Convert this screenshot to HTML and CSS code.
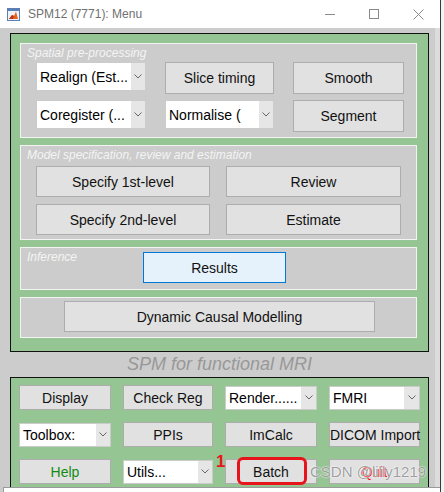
FILE: index.html
```html
<!DOCTYPE html>
<html lang="en">
<head>
    <meta charset="UTF-8">
    <title>SPM12 (7771): Menu</title>
    <link rel="stylesheet" href="styles.css">
</head>
<body>
<div class="page">
    <div class="window">
        <!-- title bar -->
        <div class="titlebar">
            <svg class="app-icon" viewBox="0 0 13 13">
                <rect x="0.5" y="0.5" width="12" height="12" fill="#eef3fa" stroke="#5b7fb5"/>
                <rect x="1" y="1" width="11" height="2" fill="#5b7fb5"/>
                <path d="M2 11 L5 7 L7 8 L9 3.5 L11 11 Z" fill="#e8621c"/>
                <path d="M5 7 L7 8 L6 11 L2 11 Z" fill="#b9361a"/>
            </svg>
            <span class="title">SPM12 (7771): Menu</span>
            <div class="caption-btns">
                <span class="cap"><svg width="10" height="1"><line x1="0" y1="0.5" x2="10" y2="0.5" stroke="#8a8a8a"/></svg></span>
                <span class="cap"><svg width="10" height="10"><rect x="0.5" y="0.5" width="9" height="9" fill="none" stroke="#8a8a8a"/></svg></span>
                <span class="cap"><svg width="11" height="11"><path d="M0.5 0.5L10.5 10.5M10.5 0.5L0.5 10.5" stroke="#8a8a8a"/></svg></span>
            </div>
        </div>

        <div class="client">
            <!-- main menu panel -->
            <div class="green-box top-box">
                <div class="frame frame-spatial">
                    <span class="frame-label">Spatial pre-processing</span>
                    <div class="spatial-grid">
                        <div class="popup tall">
                            <span class="popup-text">Realign (Est...</span>
                            <span class="popup-arrow"><svg width="8" height="5"><polyline points="0.5,0.5 4,4 7.5,0.5" fill="none" stroke="#666"/></svg></span>
                        </div>
                        <button class="btn">Slice timing</button>
                        <button class="btn">Smooth</button>
                        <div class="popup tall">
                            <span class="popup-text">Coregister (...</span>
                            <span class="popup-arrow"><svg width="8" height="5"><polyline points="0.5,0.5 4,4 7.5,0.5" fill="none" stroke="#666"/></svg></span>
                        </div>
                        <div class="popup tall">
                            <span class="popup-text">Normalise (</span>
                            <span class="popup-arrow"><svg width="8" height="5"><polyline points="0.5,0.5 4,4 7.5,0.5" fill="none" stroke="#666"/></svg></span>
                        </div>
                        <button class="btn">Segment</button>
                    </div>
                </div>

                <div class="frame frame-model">
                    <span class="frame-label">Model specification, review and estimation</span>
                    <div class="model-grid">
                        <button class="btn">Specify 1st-level</button>
                        <button class="btn">Review</button>
                        <button class="btn">Specify 2nd-level</button>
                        <button class="btn">Estimate</button>
                    </div>
                </div>

                <div class="frame frame-inference">
                    <span class="frame-label">Inference</span>
                    <button class="btn btn-focus results-btn">Results</button>
                </div>

                <div class="frame frame-dcm">
                    <button class="btn dcm-btn">Dynamic Causal Modelling</button>
                </div>
            </div>

            <div class="tagline">SPM for functional MRI</div>

            <!-- tools panel -->
            <div class="green-box bottom-box">
                <div class="tools-grid">
                    <button class="btn">Display</button>
                    <button class="btn">Check Reg</button>
                    <div class="popup">
                        <span class="popup-text">Render......</span>
                        <span class="popup-arrow wide"><svg width="8" height="5"><polyline points="0.5,0.5 4,4 7.5,0.5" fill="none" stroke="#666"/></svg></span>
                    </div>
                    <div class="popup">
                        <span class="popup-text">FMRI</span>
                        <span class="popup-arrow wide"><svg width="8" height="5"><polyline points="0.5,0.5 4,4 7.5,0.5" fill="none" stroke="#666"/></svg></span>
                    </div>

                    <div class="popup">
                        <span class="popup-text">Toolbox:</span>
                        <span class="popup-arrow"><svg width="8" height="5"><polyline points="0.5,0.5 4,4 7.5,0.5" fill="none" stroke="#666"/></svg></span>
                    </div>
                    <button class="btn">PPIs</button>
                    <button class="btn">ImCalc</button>
                    <button class="btn">DICOM Import</button>

                    <button class="btn btn-help">Help</button>
                    <div class="popup">
                        <span class="popup-text">Utils...</span>
                        <span class="popup-arrow"><svg width="8" height="5"><polyline points="0.5,0.5 4,4 7.5,0.5" fill="none" stroke="#666"/></svg></span>
                    </div>
                    <div class="batch-cell">
                        <button class="btn">Batch</button>
                        <span class="mark-box"></span>
                        <span class="mark-num">1</span>
                    </div>
                    <button class="btn btn-quit">Quit</button>
                </div>
            </div>

            <div class="watermark">CSDN @lilly1219</div>
        </div>

        <div class="taskstrip"></div>
    </div>
    <div class="edge"></div>
    <div class="beyond"></div>
</div>
</body>
</html>
```

FILE: styles.css
```css
/* page + window frame */
body {
    margin: 0;
    background: #fff;
    font-family: "Liberation Sans", Arial, sans-serif;
}

.page {
    display: flex;
    width: 444px;
    height: 492px;
    overflow: hidden;
}

.window {
    width: 440px;
    flex: none;
    display: flex;
    flex-direction: column;
    background: #cccccc;
}

.edge {
    width: 1px;
    background: #3a3a3a;
}

.beyond {
    flex: 1;
    background: #f2f2f2;
}

/* title bar */
.titlebar {
    height: 28px;
    flex: none;
    background: #fff;
    display: flex;
    align-items: center;
}

.app-icon {
    width: 13px;
    height: 13px;
    margin-left: 7px;
}

.title {
    margin-left: 8px;
    font-size: 12px;
    color: #707070;
}

.caption-btns {
    margin-left: auto;
    display: flex;
}

.cap {
    width: 44px;
    height: 28px;
    display: flex;
    align-items: center;
    justify-content: center;
}

/* client area */
.client {
    position: relative;
    height: 459px;
    flex: none;
    box-sizing: border-box;
    padding-top: 5px;
    border-right: 5px solid #dcdcdc;
    overflow: hidden;
}

.green-box {
    margin-left: 10px;
    width: 419px;
    box-sizing: border-box;
    background: #95c593;
    border: 1px solid #111;
}

.top-box {
    padding: 9px 11px 13px 9px;
    display: flex;
    flex-direction: column;
    gap: 7px;
}

/* grey frames inside the menu */
.frame {
    position: relative;
    box-sizing: border-box;
    background: #cccccc;
    border: 1px solid #f3f3f3;
}

.frame-label {
    position: absolute;
    top: 2px;
    left: 6px;
    font-size: 12px;
    line-height: 14px;
    font-style: italic;
    color: #f4f4f4;
    white-space: nowrap;
}

.frame-spatial {
    height: 95px;
    padding: 18px 0 0 15px;
}

.spatial-grid {
    display: grid;
    grid-template-columns: 110px 109px 111px;
    grid-auto-rows: 32px;
    column-gap: 19px;
    row-gap: 6px;
}

.frame-model {
    height: 95px;
    padding: 20px 0 0 15px;
}

.model-grid {
    display: grid;
    grid-template-columns: 174px 175px;
    grid-auto-rows: 31px;
    column-gap: 16px;
    row-gap: 7px;
}

.frame-inference {
    height: 43px;
    padding: 4px 0 0 122px;
}

.frame-dcm {
    height: 41px;
    padding: 3px 0 0 43px;
}

/* buttons */
.btn {
    width: 100%;
    height: 100%;
    margin: 0;
    padding: 0;
    box-sizing: border-box;
    font-family: inherit;
    font-size: 14px;
    color: #111;
    background: #e1e1e1;
    border: 1px solid #adadad;
    white-space: nowrap;
}

.btn-focus {
    background: #e5f1fb;
    border-color: #0078d7;
}

.results-btn {
    width: 143px;
    height: 31px;
}

.dcm-btn {
    width: 311px;
    height: 31px;
}

.btn-help {
    color: #118c11;
}

.btn-quit {
    color: #ff0000;
}

/* popup menus */
.popup {
    display: flex;
    height: 24px;
    align-self: center;
    box-sizing: border-box;
    background: #fff;
    border: 1px solid #cbcbcb;
    font-size: 14px;
    color: #000;
}

.popup.tall {
    height: 29px;
    align-self: start;
}

.popup-text {
    flex: 1;
    display: flex;
    align-items: center;
    padding-left: 3px;
    overflow: hidden;
    white-space: nowrap;
}

.popup-arrow {
    width: 14px;
    flex: none;
    display: flex;
    align-items: center;
    justify-content: center;
    background: #e6e6e6;
}

.popup-arrow.wide {
    width: 15px;
}

/* tagline */
.tagline {
    margin-left: 10px;
    width: 419px;
    height: 25px;
    line-height: 25px;
    text-align: center;
    font-size: 18px;
    font-style: italic;
    color: #989898;
}

/* tools panel */
.bottom-box {
    height: 120px;
    padding: 7px 0 0 8px;
    border-bottom: none;
}

.tools-grid {
    display: grid;
    grid-template-columns: 92px 90px 92px 91px;
    grid-auto-rows: 25px;
    column-gap: 12px;
    row-gap: 12px;
}

/* annotation over the Batch button */
.batch-cell {
    position: relative;
}

.mark-box {
    position: absolute;
    left: 12px;
    top: -2px;
    width: 70px;
    height: 28px;
    box-sizing: border-box;
    border: 3px solid #e8141b;
    border-radius: 6px;
}

.mark-num {
    position: absolute;
    left: -9px;
    top: -6px;
    font-size: 17px;
    line-height: 17px;
    font-weight: bold;
    color: #e8141b;
}

.watermark {
    position: absolute;
    left: 310px;
    top: 435px;
    font-size: 15px;
    line-height: 17px;
    color: rgba(125, 125, 125, 0.75);
    text-shadow: 0 0 2px #fff, 0 0 1px #fff;
    white-space: nowrap;
}

.taskstrip {
    height: 5px;
    margin-left: 3px;
    box-sizing: border-box;
    background: #fff;
    border-top: 1px solid #9a9a9a;
    border-left: 1px solid #9a9a9a;
}
```
